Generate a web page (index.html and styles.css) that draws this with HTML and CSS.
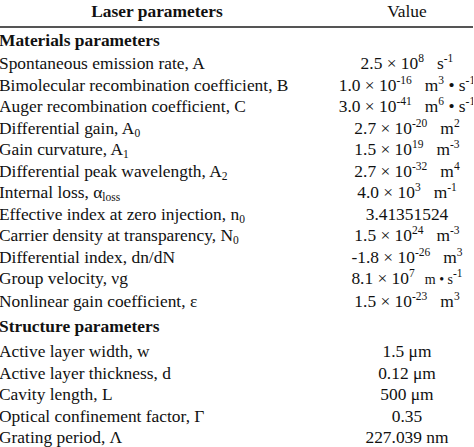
FILE: index.html
```html
<!DOCTYPE html>
<html>
<head>
<meta charset="utf-8">
<link rel="stylesheet" href="styles.css">
</head>
<body>
<div class="table">
  <div class="head">
    <div class="hname">Laser parameters</div>
    <div class="hval">Value</div>
  </div>
  <div class="section">Materials parameters</div>
  <div class="row"><div class="name">Spontaneous emission rate, A</div><div class="val">2.5 × 10<sup>8</sup><span class="u">s<sup>-1</sup></span></div></div>
  <div class="row"><div class="name">Bimolecular recombination coefficient, B</div><div class="val">1.0 × 10<sup>-16</sup><span class="u">m<sup>3</sup> • s<sup>-1</sup></span></div></div>
  <div class="row"><div class="name">Auger recombination coefficient, C</div><div class="val">3.0 × 10<sup>-41</sup><span class="u">m<sup>6</sup> • s<sup>-1</sup></span></div></div>
  <div class="row"><div class="name">Differential gain, A<sub>0</sub></div><div class="val">2.7 × 10<sup>-20</sup><span class="u">m<sup>2</sup></span></div></div>
  <div class="row"><div class="name">Gain curvature, A<sub>1</sub></div><div class="val">1.5 × 10<sup>19</sup><span class="u">m<sup>-3</sup></span></div></div>
  <div class="row"><div class="name">Differential peak wavelength, A<sub>2</sub></div><div class="val">2.7 × 10<sup>-32</sup><span class="u">m<sup>4</sup></span></div></div>
  <div class="row"><div class="name">Internal loss, α<sub>loss</sub></div><div class="val">4.0 × 10<sup>3</sup><span class="u">m<sup>-1</sup></span></div></div>
  <div class="row"><div class="name">Effective index at zero injection, n<sub>0</sub></div><div class="val">3.41351524</div></div>
  <div class="row"><div class="name">Carrier density at transparency, N<sub>0</sub></div><div class="val">1.5 × 10<sup>24</sup><span class="u">m<sup>-3</sup></span></div></div>
  <div class="row"><div class="name">Differential index, dn/dN</div><div class="val">-1.8 × 10<sup>-26</sup><span class="u">m<sup>3</sup></span></div></div>
  <div class="row"><div class="name">Group velocity, νg</div><div class="val">8.1 × 10<sup>7</sup><span class="u small">m • s<sup>-1</sup></span></div></div>
  <div class="row"><div class="name">Nonlinear gain coefficient, ε</div><div class="val">1.5 × 10<sup>-23</sup><span class="u">m<sup>3</sup></span></div></div>
  <div class="section s2">Structure parameters</div>
  <div class="row"><div class="name">Active layer width, w</div><div class="val">1.5 μm</div></div>
  <div class="row"><div class="name">Active layer thickness, d</div><div class="val">0.12 μm</div></div>
  <div class="row"><div class="name">Cavity length, L</div><div class="val">500 μm</div></div>
  <div class="row"><div class="name">Optical confinement factor, Γ</div><div class="val">0.35</div></div>
  <div class="row"><div class="name">Grating period, Λ</div><div class="val">227.039 nm</div></div>
</div>
</body>
</html>
```
FILE: styles.css
```css
html, body {
  margin: 0;
  padding: 0;
  background: #fff;
  overflow: hidden;
}
body {
  font-family: "Liberation Serif", "Times New Roman", serif;
  font-size: 17.4px;
  color: #111;
  width: 474px;
  height: 447px;
}
.table {
  width: 474px;
  margin-left: -1px;
  overflow: hidden;
}
.head {
  display: grid;
  grid-template-columns: 316px 184px;
  height: 26px;
  line-height: 22px;
  border-bottom: 2px solid #555;
}
.hname {
  font-weight: bold;
  text-align: center;
}
.hval {
  text-align: center;
}
.section {
  font-weight: bold;
  line-height: 22px;
  padding-top: 1px;
  padding-bottom: 2px;
}
.section.s2 {
  padding-top: 3px;
  padding-bottom: 4px;
}
.row {
  display: grid;
  grid-template-columns: 316px 184px;
  line-height: 21.5px;
  white-space: nowrap;
}
.val {
  text-align: center;
}
sup, sub {
  font-size: 11.5px;
  line-height: 0;
}
sup {
  vertical-align: 7px;
}
sub {
  vertical-align: -3px;
}
.u {
  margin-left: 13px;
}
.u.small {
  font-size: 14px;
  margin-left: 10px;
}
```
